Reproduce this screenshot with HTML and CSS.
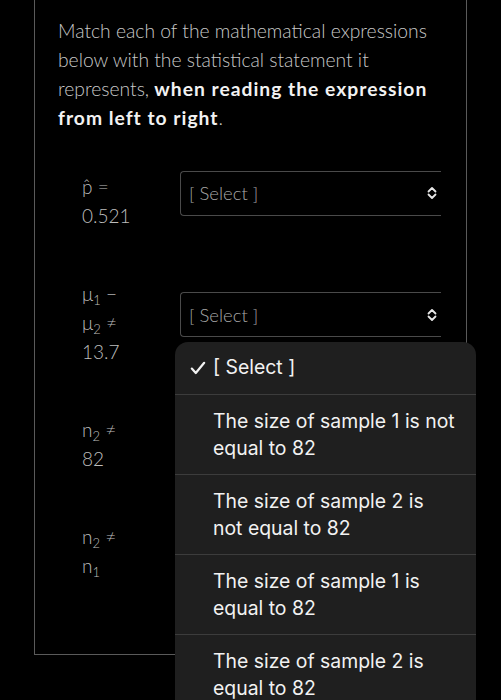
FILE: index.html
```html
<!DOCTYPE html>
<html lang="en">
<head>
<meta charset="utf-8">
<link rel="stylesheet" href="styles.css">
</head>
<body>
<div class="panel">
  <p class="intro">Match each of the mathematical expressions below with the statistical statement it represents, <strong>when reading the expression from left to right</strong>.</p>
  <div class="rows">
    <div class="row">
      <div class="label">p̂ = 0.521</div>
      <div class="select"><span>[ Select ]</span><svg class="chev" width="10" height="14" viewBox="0 0 10 14"><path d="M1.5 5.5 L5 2 L8.5 5.5 M1.5 8.5 L5 12 L8.5 8.5" fill="none" stroke="#e6e6e6" stroke-width="1.8" stroke-linecap="round" stroke-linejoin="round"/></svg></div>
    </div>
    <div class="row">
      <div class="label">μ<sub>1</sub> − μ<sub>2</sub> ≠ 13.7</div>
      <div class="select"><span>[ Select ]</span><svg class="chev" width="10" height="14" viewBox="0 0 10 14"><path d="M1.5 5.5 L5 2 L8.5 5.5 M1.5 8.5 L5 12 L8.5 8.5" fill="none" stroke="#e6e6e6" stroke-width="1.8" stroke-linecap="round" stroke-linejoin="round"/></svg></div>
    </div>
    <div class="row">
      <div class="label">n<sub>2</sub> ≠ 82</div>
      <div class="select"><span>[ Select ]</span></div>
    </div>
    <div class="row">
      <div class="label">n<sub>2</sub> ≠ n<sub>1</sub></div>
      <div class="select"><span>[ Select ]</span></div>
    </div>
  </div>
</div>
<ul class="menu">
  <li class="item selected"><svg class="check" width="16" height="14" viewBox="0 0 16 14"><path d="M1.8 7.6 L5.8 12 L14.2 1.8" fill="none" stroke="#f2f2f2" stroke-width="2.2" stroke-linecap="round" stroke-linejoin="round"/></svg>[ Select ]</li>
  <li class="item">The size of sample 1 is not equal to 82</li>
  <li class="item">The size of sample 2 is not equal to 82</li>
  <li class="item">The size of sample 1 is equal to 82</li>
  <li class="item">The size of sample 2 is equal to 82</li>
</ul>
</body>
</html>
```
FILE: styles.css
```css
html, body {
  margin: 0;
  padding: 0;
  background: #000;
  height: 700px;
  overflow: hidden;
}
body {
  position: relative;
  font-family: Lato, "Open Sans", sans-serif;
}
.panel {
  margin-left: 34px;
  width: 433px;
  border: 1px solid #5a5a5a;
  border-top: none;
  padding: 16px 0 74px 23px;
  box-sizing: border-box;
}
.intro {
  margin: 0;
  color: #c8c8c8;
  font-weight: 300;
  font-size: 19.3px;
  line-height: 29px;
  padding-right: 20px;
}
.intro strong {
  font-weight: 700;
  letter-spacing: 1px;
  color: #f2f2f2;
}
.rows {
  margin-top: 24px;
  padding-left: 24px;
  display: flex;
  flex-direction: column;
  gap: 33px;
}
.row {
  display: flex;
  align-items: center;
}
.label {
  width: 50px;
  flex: none;
  padding-top: 16px;
  color: #bdbdbd;
  font-weight: 300;
  font-size: 19px;
  line-height: 29px;
}
.label sub {
  font-size: 13px;
  line-height: 0;
  vertical-align: -4px;
}
.select {
  margin-left: 48px;
  width: 261px;
  height: 45px;
  box-sizing: border-box;
  border: 1px solid #4a4a4a;
  border-right: none;
  border-radius: 4px 0 0 4px;
  display: flex;
  align-items: center;
  justify-content: space-between;
  padding: 0 4px 0 8px;
  color: #a8a8a8;
  font-weight: 300;
  font-size: 18.5px;
}
.chev {
  display: block;
}
.menu {
  position: absolute;
  left: 175px;
  top: 342px;
  width: 301px;
  margin: 0;
  padding: 0;
  list-style: none;
  background: #1f1f1f;
  border-radius: 13px 13px 0 0;
  font-family: Inter, "Noto Sans", sans-serif;
  font-size: 19.4px;
  line-height: 27px;
  color: #f2f2f2;
}
.item {
  position: relative;
  padding: 13px 20px 12px 38px;
  border-top: 1px solid #3c3c3c;
}
.item.selected {
  border-top: none;
  padding-top: 12px;
  padding-bottom: 13px;
}
.check {
  position: absolute;
  left: 15px;
  top: 19px;
}
```
